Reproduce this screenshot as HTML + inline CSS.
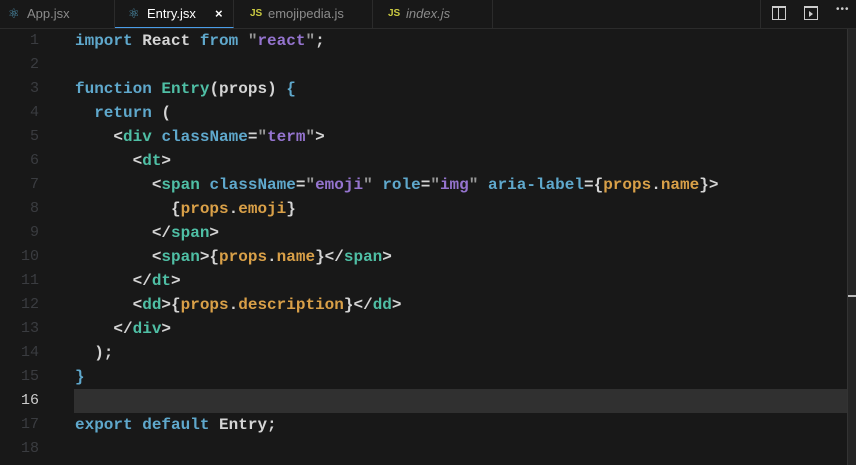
<!DOCTYPE html><html><head><style>
body{margin:0;width:856px;height:465px;background:#181818;overflow:hidden;font-family:"Liberation Mono",monospace;position:relative}
.tabs{position:absolute;left:0;top:0;width:856px;height:28px;background:#181818;border-bottom:1px solid #2b2b2b;font-family:"Liberation Sans",sans-serif;font-size:13px}
.tab{position:absolute;top:0;height:28px;line-height:28px;color:#8b8b8b;border-right:1px solid #2b2b2b;box-sizing:border-box}
.tab .ic{position:absolute;top:0}
.js{color:#cbcb41;font-weight:bold;font-size:10px}
.code{position:absolute;left:0;top:29px;width:847px;font-weight:bold}
.ln{height:24px;line-height:24px;font-size:16px;white-space:pre;position:relative}
.n{position:absolute;right:808px;color:#3a3c40;font-size:15px;font-weight:normal}
.t{position:absolute;left:75px;color:#d4d4d4}
.k{color:#5fa8cc}.s{color:#9574cf}.g{color:#4fbfa5}.p{color:#d9a048}.a{color:#5fa8cc}.d{color:#999}.b{color:#5fa8cc}
.cur{background:#303030}
</style></head><body>
<div class="tabs">
<div class="tab" style="left:0;width:115px"><span class="ic" style="left:8px;color:#519aba">⚛</span><span style="position:absolute;left:27px">App.jsx</span></div>
<div class="tab" style="left:115px;width:119px;background:#181818;border-bottom:1px solid #4a9de8;color:#fff"><span class="ic" style="left:13px;color:#519aba">⚛</span><span style="position:absolute;left:32px">Entry.jsx</span><span style="position:absolute;left:100px;font-weight:bold">×</span></div>
<div class="tab" style="left:234px;width:139px"><span class="ic js" style="left:16px">JS</span><span style="position:absolute;left:34px">emojipedia.js</span></div>
<div class="tab" style="left:373px;width:120px"><span class="ic js" style="left:15px">JS</span><span style="position:absolute;left:33px;font-style:italic">index.js</span></div>
<div style="position:absolute;left:760px;top:0;width:1px;height:28px;background:#2b2b2b"></div>
<div style="position:absolute;left:772px;top:6px;width:12px;height:11px;border:1px solid #ccc;border-top-width:2px"><div style="position:absolute;left:5px;top:0;width:1px;height:11px;background:#ccc"></div></div>
<div style="position:absolute;left:804px;top:6px;width:12px;height:11px;border:1px solid #ccc;border-top-width:2px"><div style="position:absolute;left:4px;top:3px;width:0;height:0;border-left:4px solid #ccc;border-top:3px solid transparent;border-bottom:3px solid transparent"></div></div>
<div style="position:absolute;left:836px;top:4px;color:#ccc;font-size:10px;letter-spacing:1px">•••</div>
</div>
<div style="position:absolute;left:847px;top:29px;width:9px;height:436px;background:#252525;border-left:1px solid #333"></div>
<div style="position:absolute;left:848px;top:295px;width:8px;height:2px;background:#bbb"></div>
<div class="code">
<div class="ln"><span class="n">1</span><span class="t"><span class="k">import</span> React <span class="k">from</span> <span class="d">"</span><span class="s">react</span><span class="d">"</span>;</span></div>
<div class="ln"><span class="n">2</span></div>
<div class="ln"><span class="n">3</span><span class="t"><span class="k">function</span> <span class="g">Entry</span>(<span>props</span>) <span class="b">{</span></span></div>
<div class="ln"><span class="n">4</span><span class="t">  <span class="k">return</span> (</span></div>
<div class="ln"><span class="n">5</span><span class="t">    &lt;<span class="g">div</span> <span class="a">className</span>=<span class="d">"</span><span class="s">term</span><span class="d">"</span>&gt;</span></div>
<div class="ln"><span class="n">6</span><span class="t">      &lt;<span class="g">dt</span>&gt;</span></div>
<div class="ln"><span class="n">7</span><span class="t">        &lt;<span class="g">span</span> <span class="a">className</span>=<span class="d">"</span><span class="s">emoji</span><span class="d">"</span> <span class="a">role</span>=<span class="d">"</span><span class="s">img</span><span class="d">"</span> <span class="a">aria-label</span>={<span class="p">props</span>.<span class="p">name</span>}&gt;</span></div>
<div class="ln"><span class="n">8</span><span class="t">          {<span class="p">props</span>.<span class="p">emoji</span>}</span></div>
<div class="ln"><span class="n">9</span><span class="t">        &lt;/<span class="g">span</span>&gt;</span></div>
<div class="ln"><span class="n">10</span><span class="t">        &lt;<span class="g">span</span>&gt;{<span class="p">props</span>.<span class="p">name</span>}&lt;/<span class="g">span</span>&gt;</span></div>
<div class="ln"><span class="n">11</span><span class="t">      &lt;/<span class="g">dt</span>&gt;</span></div>
<div class="ln"><span class="n">12</span><span class="t">      &lt;<span class="g">dd</span>&gt;{<span class="p">props</span>.<span class="p">description</span>}&lt;/<span class="g">dd</span>&gt;</span></div>
<div class="ln"><span class="n">13</span><span class="t">    &lt;/<span class="g">div</span>&gt;</span></div>
<div class="ln"><span class="n">14</span><span class="t">  );</span></div>
<div class="ln"><span class="n">15</span><span class="t"><span class="b">}</span></span></div>
<div class="ln"><span class="n" style="color:#ccc">16</span><span class="cur" style="position:absolute;left:74px;right:0;top:0;height:24px"></span></div>
<div class="ln"><span class="n">17</span><span class="t"><span class="k">export</span> <span class="k">default</span> Entry;</span></div>
<div class="ln"><span class="n">18</span></div>
</div>
</body></html>
